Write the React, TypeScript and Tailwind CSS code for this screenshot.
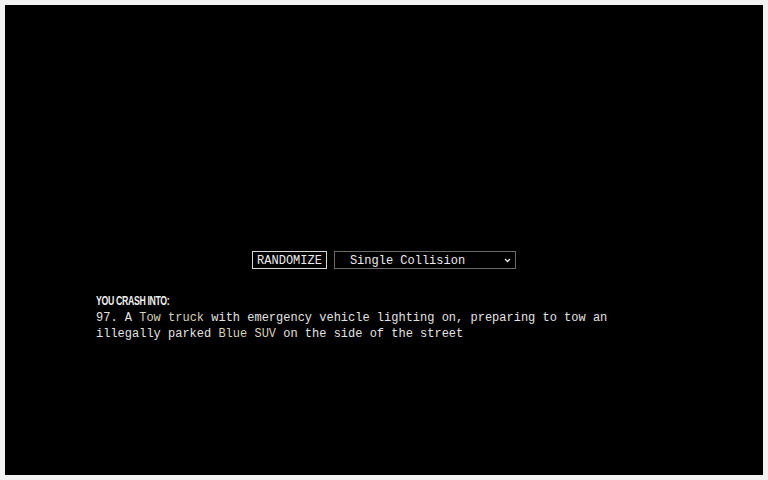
import React from 'react';

const mono = { fontFamily: '"Liberation Mono", "DejaVu Sans Mono", monospace' };

const App: React.FC = () => {
  return (
    <div className="w-screen h-screen bg-[#f2f2f2] p-[5px]">
      <div className="h-full bg-black text-[#e2e2e2] pt-[246px]" style={mono}>
        <div className="flex justify-center gap-[7px]">
          <button className="h-[18px] px-[4px] pt-[1px] border border-[#d8d8d8] text-[12px] leading-none text-[#ececec]">
            RANDOMIZE
          </button>
          <div className="relative w-[182px] h-[18px] border border-[#6a6a6a] flex items-center pl-[15px] pt-[1px] text-[12px] text-[#ececec]">
            Single Collision
            <svg className="absolute right-[4px] top-[6px]" width="7" height="5" viewBox="0 0 7 5">
              <path d="M1 1l2.5 2.5L6 1" stroke="#e6e6e6" strokeWidth="1.3" fill="none" />
            </svg>
          </div>
        </div>
        <div className="pl-[91px] pt-[25px] w-[620px]">
          <h3
            className="text-[12.5px] font-bold uppercase tracking-[-0.04em] leading-[14px] text-[#f0f0f0] scale-x-[0.7] origin-left"
            style={{ fontFamily: '"Liberation Sans", Arial, sans-serif' }}
          >
            You crash into:
          </h3>
          <p className="text-[12px] leading-[16px] mt-[2px]">
            97. A <span className="text-[#d6d2bc]">Tow truck</span> with emergency vehicle lighting on, preparing to tow an
            illegally parked <span className="text-[#d6d2bc]">Blue SUV</span> on the side of the street
          </p>
        </div>
      </div>
    </div>
  );
};

export default App;
